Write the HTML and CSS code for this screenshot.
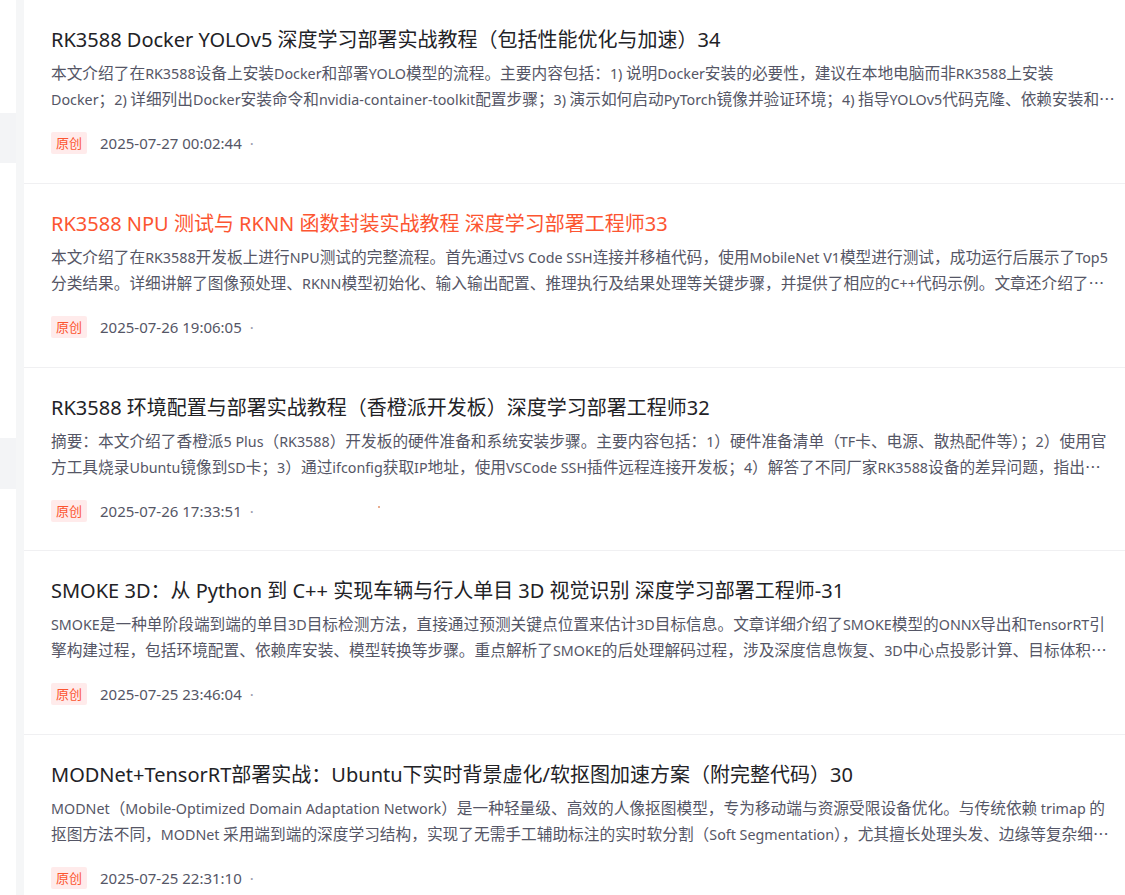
FILE: index.html
```html
<!DOCTYPE html>
<html lang="zh-CN">
<head>
<meta charset="utf-8">
<title>文章列表</title>
<link rel="stylesheet" href="styles.css">
</head>
<body>
<div class="page">
  <aside class="side">
    <div class="side-block side-block-1"></div>
    <div class="side-block side-block-2"></div>
  </aside>
  <main class="list">
    <article class="item">
      <h4 class="title">RK3588 Docker YOLOv5 深度学习部署实战教程（包括性能优化与加速）34</h4>
      <p class="desc">本文介绍了在<span class="en">RK3588</span>设备上安装<span class="en">Docker</span>和部署<span class="en">YOLO</span>模型的流程。主要内容包括：<span class="en">1)</span> 说明<span class="en">Docker</span>安装的必要性，建议在本地电脑而非<span class="en">RK3588</span>上安装<span class="en">Docker</span>；<span class="en">2)</span> 详细列出<span class="en">Docker</span>安装命令和<span class="en">nvidia-container-toolkit</span>配置步骤；<span class="en">3)</span> 演示如何启动<span class="en">PyTorch</span>镜像并验证环境；<span class="en">4)</span> 指导<span class="en">YOLOv5</span>代码克隆、依赖安装和模型训练测试等步骤。</p>
      <div class="meta"><span class="tag">原创</span><span class="date">2025-07-27 00:02:44</span><span class="dot">·</span></div>
    </article>
    <article class="item">
      <h4 class="title title-hover">RK3588 NPU 测试与 RKNN 函数封装实战教程 深度学习部署工程师33</h4>
      <p class="desc">本文介绍了在<span class="en">RK3588</span>开发板上进行<span class="en">NPU</span>测试的完整流程。首先通过<span class="en">VS Code SSH</span>连接并移植代码，使用<span class="en">MobileNet V1</span>模型进行测试，成功运行后展示了<span class="en">Top5</span>分类结果。详细讲解了图像预处理、<span class="en">RKNN</span>模型初始化、输入输出配置、推理执行及结果处理等关键步骤，并提供了相应的<span class="en">C++</span>代码示例。文章还介绍了对<span class="en">RKNN</span>函数的封装方法。</p>
      <div class="meta"><span class="tag">原创</span><span class="date">2025-07-26 19:06:05</span><span class="dot">·</span></div>
    </article>
    <article class="item">
      <h4 class="title">RK3588 环境配置与部署实战教程（香橙派开发板）深度学习部署工程师32</h4>
      <p class="desc">摘要：本文介绍了香橙派<span class="en">5 Plus</span>（<span class="en">RK3588</span>）开发板的硬件准备和系统安装步骤。主要内容包括：<span class="en">1</span>）硬件准备清单（<span class="en">TF</span>卡、电源、散热配件等）；<span class="en">2</span>）使用官方工具烧录<span class="en">Ubuntu</span>镜像到<span class="en">SD</span>卡；<span class="en">3</span>）通过<span class="en">ifconfig</span>获取<span class="en">IP</span>地址，使用<span class="en">VSCode SSH</span>插件远程连接开发板；<span class="en">4</span>）解答了不同厂家<span class="en">RK3588</span>设备的差异问题，指出不同厂家的系统镜像不能通用。</p>
      <div class="meta"><span class="tag">原创</span><span class="date">2025-07-26 17:33:51</span><span class="dot">·</span><span class="speck"></span></div>
    </article>
    <article class="item">
      <h4 class="title">SMOKE 3D：从 Python 到 C++ 实现车辆与行人单目 3D 视觉识别 深度学习部署工程师-31</h4>
      <p class="desc"><span class="en">SMOKE</span>是一种单阶段端到端的单目<span class="en">3D</span>目标检测方法，直接通过预测关键点位置来估计<span class="en">3D</span>目标信息。文章详细介绍了<span class="en">SMOKE</span>模型的<span class="en">ONNX</span>导出和<span class="en">TensorRT</span>引擎构建过程，包括环境配置、依赖库安装、模型转换等步骤。重点解析了<span class="en">SMOKE</span>的后处理解码过程，涉及深度信息恢复、<span class="en">3D</span>中心点投影计算、目标体积估计等内容。</p>
      <div class="meta"><span class="tag">原创</span><span class="date">2025-07-25 23:46:04</span><span class="dot">·</span></div>
    </article>
    <article class="item">
      <h4 class="title">MODNet+TensorRT部署实战：Ubuntu下实时背景虚化/软抠图加速方案（附完整代码）30</h4>
      <p class="desc"><span class="en">MODNet</span>（<span class="en">Mobile-Optimized Domain Adaptation Network</span>）是一种轻量级、高效的人像抠图模型，专为移动端与资源受限设备优化。与传统依赖 <span class="en">trimap</span> 的抠图方法不同，<span class="en">MODNet</span> 采用端到端的深度学习结构，实现了无需手工辅助标注的实时软分割（<span class="en">Soft Segmentation</span>），尤其擅长处理头发、边缘等复杂细节区域。</p>
      <div class="meta"><span class="tag">原创</span><span class="date">2025-07-25 22:31:10</span><span class="dot">·</span></div>
    </article>
  </main>
</div>
</body>
</html>
```

FILE: styles.css
```css
* { box-sizing: border-box; }
html, body {
  margin: 0;
  padding: 0;
  background: #f5f6f7;
  font-family: "Noto Sans", "Noto Sans CJK SC", sans-serif;
  overflow: hidden;
}
.page {
  display: flex;
  gap: 8px;
  width: 1125px;
  height: 895px;
  overflow: hidden;
}
.side {
  width: 16px;
  flex: none;
  background: #ffffff;
  display: flex;
  flex-direction: column;
}
.side-block {
  background: #f3f4f6;
  height: 50px;
}
.side-block-1 { margin-top: 113px; }
.side-block-2 { margin-top: 275px; height: 51px; }
.list {
  flex: 1;
  background: #ffffff;
  min-width: 0;
}
.item {
  padding: 26px 10px 27.75px 27px;
  border-bottom: 1px solid #f0f0f2;
}
.title {
  margin: 0;
  font-size: 20px;
  line-height: 28px;
  font-weight: 400;
  color: #222226;
  white-space: nowrap;
}
.title-hover { color: #fc5531; }
.desc {
  margin: 6px 0 0;
  font-family: "Noto Sans CJK SC", sans-serif;
  font-size: 15.7px;
  line-height: 26px;
  color: #555666;
  display: -webkit-box;
  -webkit-box-orient: vertical;
  -webkit-line-clamp: 2;
  overflow: hidden;
}
.en {
  font-family: "Noto Sans", "Noto Sans CJK SC", sans-serif;
  font-size: 14.3px;
  line-height: 1;
}
.meta {
  margin-top: 19px;
  display: flex;
  align-items: center;
  height: 24px;
  font-size: 15px;
  color: #555666;
  position: relative;
}
.tag {
  display: inline-block;
  height: 22px;
  line-height: 22px;
  padding: 0 5px;
  font-size: 13px;
  color: #fc5531;
  background: #ffebeb;
  border-radius: 2px;
}
.date { margin-left: 13px; }
.dot { margin-left: 8px; color: #999aaa; }
.speck {
  position: absolute;
  left: 327px;
  top: 7px;
  width: 2px;
  height: 2px;
  background: #e08a60;
  opacity: 0.7;
}
```
